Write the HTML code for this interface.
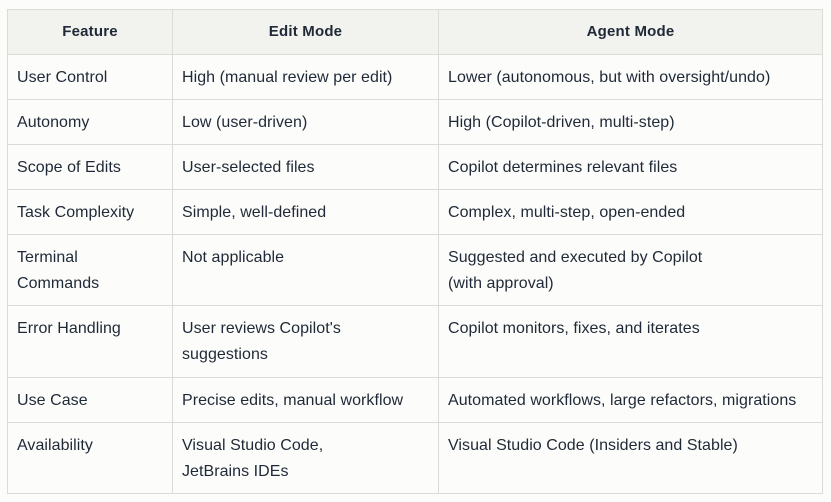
<!DOCTYPE html>
<html><head><meta charset="utf-8"><style>
html,body{margin:0;padding:0;background:#fcfcfa;width:831px;height:502px;overflow:hidden}
table{position:absolute;left:7px;top:9px;border-collapse:collapse;table-layout:fixed;width:815px;
font-family:"Liberation Sans",Arial,sans-serif;font-size:16px;letter-spacing:0.05px;color:#1f2937;}
td,th{border:1px solid #dcdcd7;padding:0 9px;vertical-align:top;line-height:26px;padding-top:10px;box-sizing:border-box}
th{background:#f2f2ee;font-weight:bold;font-size:15px;letter-spacing:0.2px;text-align:center;vertical-align:middle;padding-top:0;height:45px}
</style></head><body>
<table>
<colgroup><col style="width:165px"><col style="width:266px"><col style="width:384px"></colgroup>
<tr><th>Feature</th><th>Edit Mode</th><th>Agent Mode</th></tr>
<tr style="height:45px"><td>User Control</td><td>High (manual review per edit)</td><td>Lower (autonomous, but with oversight/undo)</td></tr>
<tr style="height:45px"><td>Autonomy</td><td>Low (user-driven)</td><td>High (Copilot-driven, multi-step)</td></tr>
<tr style="height:45px"><td>Scope of Edits</td><td>User-selected files</td><td>Copilot determines relevant files</td></tr>
<tr style="height:45px"><td>Task Complexity</td><td>Simple, well-defined</td><td>Complex, multi-step, open-ended</td></tr>
<tr style="height:71px"><td>Terminal<br>Commands</td><td>Not applicable</td><td>Suggested and executed by Copilot<br>(with approval)</td></tr>
<tr style="height:72px"><td>Error Handling</td><td>User reviews Copilot's<br>suggestions</td><td>Copilot monitors, fixes, and iterates</td></tr>
<tr style="height:45px"><td>Use Case</td><td>Precise edits, manual workflow</td><td>Automated workflows, large refactors, migrations</td></tr>
<tr style="height:71px"><td>Availability</td><td>Visual Studio Code,<br>JetBrains IDEs</td><td>Visual Studio Code (Insiders and Stable)</td></tr>
</table>
</body></html>
